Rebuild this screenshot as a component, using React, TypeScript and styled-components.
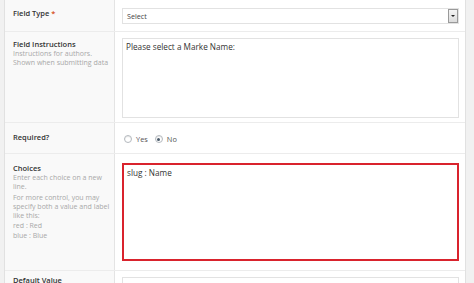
import React from "react"
import styled, { createGlobalStyle } from "styled-components"

const GlobalStyle = createGlobalStyle`
  html, body {
    margin: 0;
    padding: 0;
    background: #f1f1f1;
    font-family: "Open Sans", "Noto Sans", sans-serif;
    color: #333;
    overflow: hidden;
  }
`

const Page = styled.div`
  width: 474px;
  height: 283px;
  padding-left: 4px;
  box-sizing: border-box;
  overflow: hidden;
`

const Table = styled.div`
  width: 460px;
  background: #fff;
  border-left: 1px solid #e1e1e1;
  border-right: 1px solid #e1e1e1;
`

const Row = styled.div<{ $height: number }>`
  display: grid;
  grid-template-columns: 110px 1fr;
  height: ${(p) => p.$height}px;
  border-bottom: 1px solid #ececec;
  box-sizing: border-box;
`

const LabelCell = styled.div<{ $top: number }>`
  background: #f9f9f9;
  border-right: 1px solid #e4e4e4;
  padding: ${(p) => p.$top}px 4px 0 8px;
`

const ValueCell = styled.div<{ $top: number }>`
  padding: ${(p) => p.$top}px 6px 0 7px;
`

const Label = styled.div`
  font-size: 7.5px;
  font-weight: 600;
  line-height: 10px;
  color: #333;
`

const Required = styled.span`
  color: #d54e21;
`

const Desc = styled.p`
  margin: 0 0 1px;
  font-size: 7px;
  line-height: 9.3px;
  color: #a8a8a8;
  white-space: nowrap;
`

const FakeSelect = styled.div`
  display: flex;
  align-items: center;
  justify-content: space-between;
  height: 16px;
  box-sizing: border-box;
  border: 1px solid #e2e2e2;
  background: #fff;
  padding-left: 4px;
  font-size: 7.2px;
  color: #444;
`

const SelectButton = styled.div`
  width: 10px;
  height: 14px;
  box-sizing: border-box;
  border: 1px solid #9a9a9a;
  background: linear-gradient(#f4f4f4, #dcdcdc);
  display: flex;
  align-items: center;
  justify-content: center;

  &::after {
    content: "";
    width: 0;
    height: 0;
    border-left: 2px solid transparent;
    border-right: 2px solid transparent;
    border-top: 2px solid #222;
  }
`

const Area = styled.textarea<{ $height: number; $alert?: boolean }>`
  display: block;
  width: 100%;
  height: ${(p) => p.$height}px;
  box-sizing: border-box;
  margin: 0;
  padding: 3px 3px;
  resize: none;
  overflow: hidden;
  font-family: "Open Sans", "Noto Sans", sans-serif;
  font-size: 8.2px;
  line-height: 10px;
  color: #333;
  background: #fff;
  border: ${(p) => (p.$alert ? "2px solid #d9232d" : "1px solid #e2e2e2")};
  outline: none;
`

const Radios = styled.div`
  display: flex;
  align-items: center;
  gap: 7px;
  margin-left: 2px;
`

const RadioOption = styled.label`
  display: flex;
  align-items: center;
  gap: 4px;
  font-size: 7.4px;
  color: #555;
`

const RadioDot = styled.span<{ $checked?: boolean }>`
  width: 6px;
  height: 6px;
  border-radius: 50%;
  border: 1px solid #b4b9be;
  background: #fff;
  box-shadow: inset 0 1px 1px rgba(0, 0, 0, 0.1);
  display: flex;
  align-items: center;
  justify-content: center;

  &::after {
    content: "";
    width: 3px;
    height: 3px;
    border-radius: 50%;
    background: ${(p) => (p.$checked ? "#4a5a6a" : "transparent")};
  }
`

const PlainInput = styled.div`
  height: 16px;
  border: 1px solid #e2e2e2;
  background: #fff;
`

export default function App() {
  return (
    <Page>
      <GlobalStyle />
      <Table>
        <Row $height={32}>
          <LabelCell $top={8}>
            <Label>
              Field Type <Required>*</Required>
            </Label>
          </LabelCell>
          <ValueCell $top={8}>
            <FakeSelect>
              Select
              <SelectButton />
            </FakeSelect>
          </ValueCell>
        </Row>
        <Row $height={91}>
          <LabelCell $top={7}>
            <Label>Field Instructions</Label>
            <Desc>
              Instructions for authors.
              <br />
              Shown when submitting data
            </Desc>
          </LabelCell>
          <ValueCell $top={6}>
            <Area $height={80} readOnly defaultValue="Please select a Marke Name:" />
          </ValueCell>
        </Row>
        <Row $height={31}>
          <LabelCell $top={9}>
            <Label>Required?</Label>
          </LabelCell>
          <ValueCell $top={11}>
            <Radios>
              <RadioOption>
                <RadioDot />
                Yes
              </RadioOption>
              <RadioOption>
                <RadioDot $checked />
                No
              </RadioOption>
            </Radios>
          </ValueCell>
        </Row>
        <Row $height={117}>
          <LabelCell $top={9}>
            <Label>Choices</Label>
            <Desc>
              Enter each choice on a new
              <br />
              line.
            </Desc>
            <Desc>
              For more control, you may
              <br />
              specify both a value and label
              <br />
              like this:
            </Desc>
            <Desc>
              red : Red
              <br />
              blue : Blue
            </Desc>
          </LabelCell>
          <ValueCell $top={9}>
            <Area $height={98} $alert readOnly defaultValue="slug : Name" />
          </ValueCell>
        </Row>
        <Row $height={40}>
          <LabelCell $top={4}>
            <Label>Default Value</Label>
          </LabelCell>
          <ValueCell $top={6}>
            <PlainInput />
          </ValueCell>
        </Row>
      </Table>
    </Page>
  )
}
